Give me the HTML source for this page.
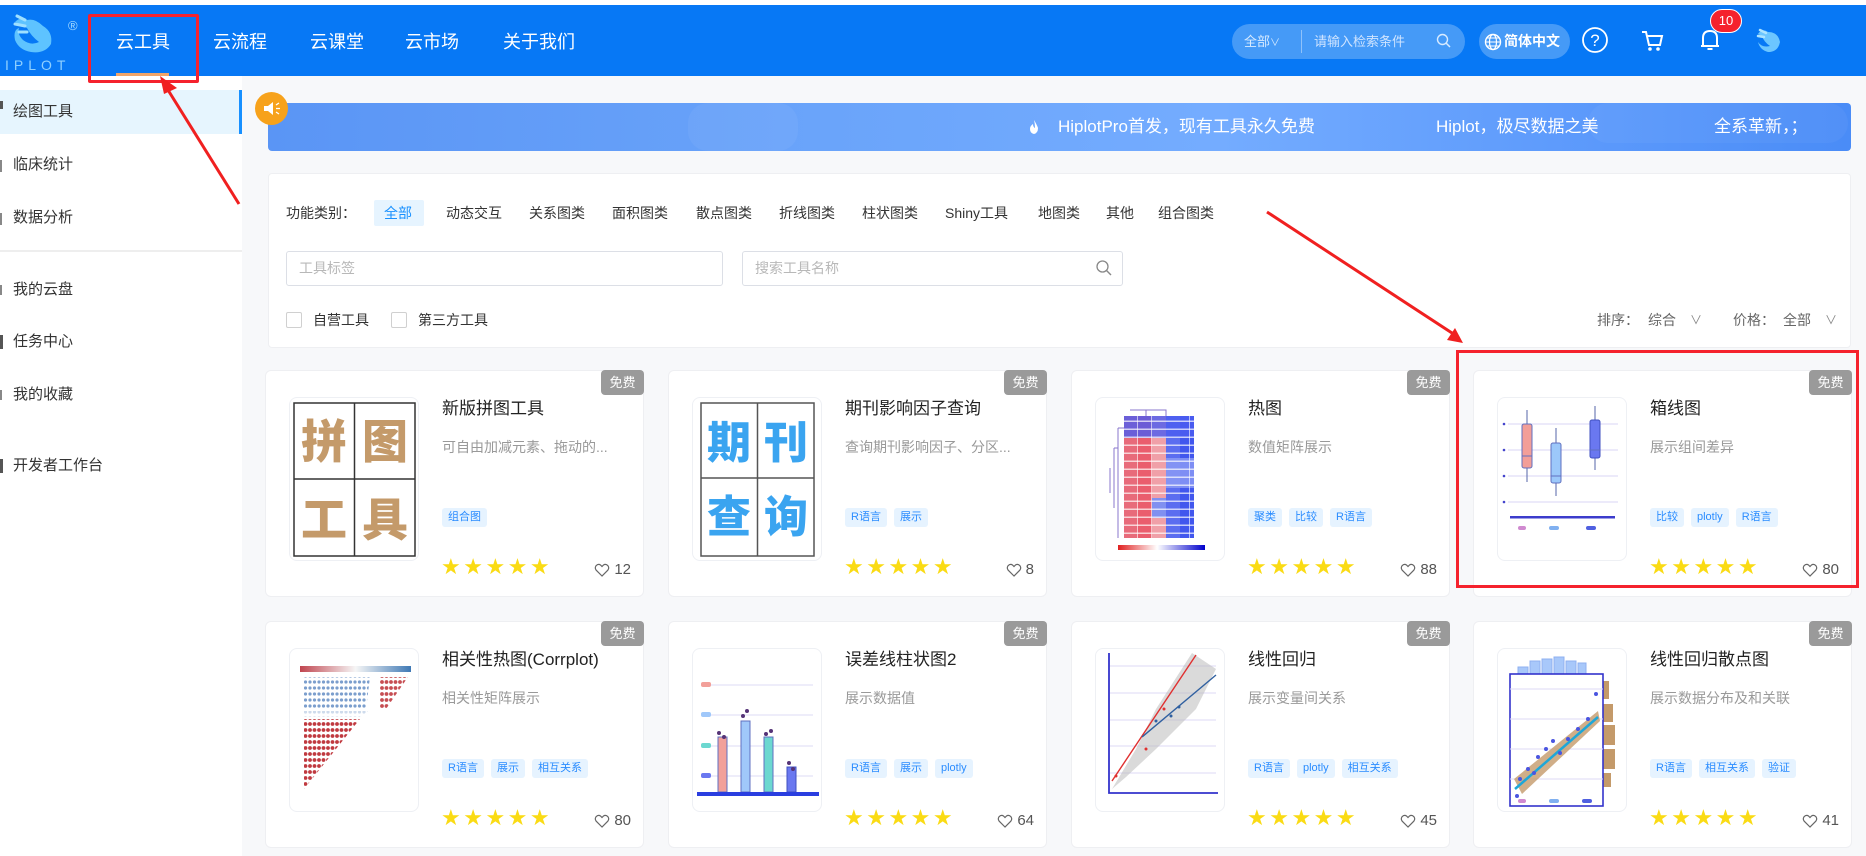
<!DOCTYPE html>
<html><head><meta charset="utf-8">
<style>
*{box-sizing:border-box;margin:0;padding:0}
body{width:1866px;height:856px;overflow:hidden;background:#f7f8fa;font-family:"Liberation Sans","Noto Sans CJK SC",sans-serif;position:relative;color:#333}
.abs{position:absolute}
.hdr{position:absolute;left:0;top:5px;width:1866px;height:71px;background:#0778f5}
.nav{position:absolute;top:29px;color:#fff;font-size:18px;line-height:26px}
.side{position:absolute;left:0;top:76px;width:242px;height:780px;background:#fff}
.si{position:absolute;left:13px;font-size:15px;color:#333;line-height:20px}
.card{position:absolute;width:379px;height:227px;background:#fff;border:1px solid #eeeff2;border-radius:6px}
.badge{position:absolute;right:-1px;top:-1px;width:43px;height:25px;background:#9a9a9a;color:#fff;font-size:13px;line-height:25px;text-align:center;border-radius:4px}
.img{position:absolute;left:23px;top:26px;width:130px;height:164px;border:1px solid #eef0f4;border-radius:8px;overflow:hidden;background:#fff}
.title{position:absolute;left:176px;top:26px;font-size:17px;color:#222;line-height:24px;white-space:nowrap}
.desc{position:absolute;left:176px;top:66px;font-size:14px;color:#999;line-height:20px;white-space:nowrap}
.tags{position:absolute;left:176px;top:137px;height:19px;display:flex;gap:7px}
.tags span{background:#e6f3ff;color:#2a8cff;font-size:11px;line-height:19px;padding:0 6px;border-radius:3px}
.stars{position:absolute;left:175px;top:185px;color:#fadb14;font-size:22px;letter-spacing:2.5px;line-height:24px;font-family:"DejaVu Sans",sans-serif}
.likes{position:absolute;right:12px;top:188px;font-size:15px;color:#555;line-height:22px;display:flex;align-items:center;gap:4px}
.tag2{position:absolute;top:200px;font-size:14px;color:#333;line-height:26px}
.inp{position:absolute;top:251px;height:35px;border:1px solid #dcdfe6;border-radius:3px;background:#fff;font-size:14px;color:#b8b8b8;line-height:33px;padding-left:12px}
.cb{position:absolute;top:312px;width:16px;height:16px;border:1px solid #d0d0d0;border-radius:2px;background:#fff}
</style></head><body>
<div class="abs" style="left:0;top:0;width:1866px;height:5px;background:#fff"></div>
<div class="hdr"></div>
<svg class="abs" style="left:5px;top:10px" width="80" height="62" viewBox="0 0 80 62">
<path d="M10 12 Q16 6 22 10 Q30 8 38 16 Q48 22 46 34 Q40 44 26 42 Q14 40 10 30 Q8 20 14 18 Q12 24 18 30 Q26 36 34 32 Q26 26 22 18 Z" fill="#5ec3ff"/>
<path d="M12 6 l8 4 M10 14 l10 2 M14 22 l8 0" stroke="#9fe0ff" stroke-width="3" stroke-linecap="round"/>
<text x="63" y="20" fill="#a8dcff" font-size="13" font-family="Liberation Sans">®</text>
<text x="0" y="60" fill="#8fd0ff" font-size="14" letter-spacing="5" font-family="Liberation Sans">IPLOT</text>
</svg>
<div class="nav" style="left:116px">云工具</div>
<div class="abs" style="left:116px;top:73px;width:53px;height:3px;background:#f0a56a"></div>
<div class="nav" style="left:213px">云流程</div>
<div class="nav" style="left:310px">云课堂</div>
<div class="nav" style="left:405px">云市场</div>
<div class="nav" style="left:503px">关于我们</div>
<div class="abs" style="left:1232px;top:24px;width:233px;height:35px;border-radius:18px;background:rgba(255,255,255,0.25)"></div>
<div class="abs" style="left:1244px;top:32px;font-size:13px;color:#d8ebff;line-height:19px">全部<span style="font-size:10px">∨</span></div>
<div class="abs" style="left:1301px;top:30px;width:1px;height:23px;background:rgba(255,255,255,0.4)"></div>
<div class="abs" style="left:1314px;top:32px;font-size:13px;color:#cfe4ff;line-height:19px">请输入检索条件</div>
<svg class="abs" style="left:1436px;top:33px" width="16" height="16"><circle cx="6.5" cy="6.5" r="5" fill="none" stroke="#d8ebff" stroke-width="1.4"/><path d="M10 10 L14 14" stroke="#d8ebff" stroke-width="1.5"/></svg>
<div class="abs" style="left:1479px;top:24px;width:91px;height:35px;border-radius:18px;background:rgba(255,255,255,0.25)"></div>
<svg class="abs" style="left:1484px;top:33px" width="18" height="18"><circle cx="9" cy="9" r="7.5" fill="none" stroke="#fff" stroke-width="1.4"/><ellipse cx="9" cy="9" rx="3.5" ry="7.5" fill="none" stroke="#fff" stroke-width="1.2"/><path d="M1.5 9 H16.5 M3 5 H15 M3 13 H15" stroke="#fff" stroke-width="1.1"/></svg>
<div class="abs" style="left:1504px;top:31px;font-size:14px;color:#fff;font-weight:bold;line-height:20px">简体中文</div>
<svg class="abs" style="left:1581px;top:26px" width="28" height="28"><circle cx="14" cy="14" r="12" fill="none" stroke="#fff" stroke-width="1.8"/><text x="14" y="20" fill="#fff" font-size="17" text-anchor="middle" font-family="Liberation Sans">?</text></svg>
<svg class="abs" style="left:1639px;top:28px" width="26" height="26"><path d="M3 4 H7 L10 17 H21 L23 8 H8" fill="none" stroke="#fff" stroke-width="2"/><circle cx="11" cy="21" r="1.8" fill="#fff"/><circle cx="19" cy="21" r="1.8" fill="#fff"/></svg>
<svg class="abs" style="left:1698px;top:27px" width="24" height="26"><path d="M5 19 V11 Q5 4 12 4 Q19 4 19 11 V19 Z M3 19 H21 M9.5 22 H14.5" fill="none" stroke="#fff" stroke-width="2"/></svg>
<div class="abs" style="left:1710px;top:9px;width:32px;height:24px;border-radius:12px;background:#f5222d;border:1px solid #fff;color:#fff;font-size:13px;line-height:22px;text-align:center">10</div>
<svg class="abs" style="left:1752px;top:24px" width="32" height="32"><path d="M6 10 Q10 4 16 8 Q26 8 28 18 Q26 28 16 28 Q8 26 6 18 Q10 24 18 22 Q12 18 10 12 Z" fill="#6cc6ff"/><path d="M8 6 l6 3 M6 12 l6 1" stroke="#aee4ff" stroke-width="2.5" stroke-linecap="round"/></svg>

<div class="side"></div>
<div class="abs" style="left:0;top:90px;width:242px;height:44px;background:#e6f5fe"></div>
<div class="abs" style="left:239px;top:90px;width:3px;height:44px;background:#1890ff"></div>
<div class="si" style="top:90px;line-height:44px">绘图工具</div>
<div class="si" style="top:155px">临床统计</div>
<div class="si" style="top:208px">数据分析</div>
<div class="abs" style="left:0;top:250px;width:242px;height:2px;background:#eee"></div>
<div class="si" style="top:280px">我的云盘</div>
<div class="si" style="top:332px">任务中心</div>
<div class="si" style="top:385px">我的收藏</div>
<div class="si" style="top:456px">开发者工作台</div>
<div class="abs" style="left:0;top:101px;width:3px;height:8px;background:#555"></div>
<div class="abs" style="left:0;top:160px;width:2px;height:12px;background:#888"></div>
<div class="abs" style="left:0;top:213px;width:2px;height:12px;background:#888"></div>
<div class="abs" style="left:0;top:285px;width:2px;height:10px;background:#888"></div>
<div class="abs" style="left:0;top:335px;width:3px;height:14px;background:#555"></div>
<div class="abs" style="left:0;top:390px;width:2px;height:10px;background:#888"></div>
<div class="abs" style="left:0;top:459px;width:3px;height:14px;background:#555"></div>

<div class="abs" style="left:268px;top:103px;width:1583px;height:48px;border-radius:4px;background:linear-gradient(90deg,#5a95f5 0%,#6aa4fa 35%,#74acff 60%,#5a98fb 85%,#4a8cf7 100%);overflow:hidden">
<div class="abs" style="left:420px;top:0;width:110px;height:48px;background:rgba(255,255,255,0.05);border-radius:20px"></div>
<div class="abs" style="left:1320px;top:0;width:260px;height:40px;background:rgba(255,255,255,0.04);border-radius:20px"></div>
</div>
<svg class="abs" style="left:1028px;top:119px" width="12" height="16"><path d="M6 1 Q9 6 10 9 Q10 14 6 15 Q2 14 2 10 Q2 7 5 5 Q5 8 7 9 Q7 5 6 1Z" fill="#fff"/></svg>
<div class="abs" style="left:1058px;top:115px;font-size:17px;color:#fff;line-height:24px;white-space:nowrap">HiplotPro首发，现有工具永久免费</div>
<div class="abs" style="left:1436px;top:115px;font-size:17px;color:#fff;line-height:24px;white-space:nowrap">Hiplot，极尽数据之美</div>
<div class="abs" style="left:1714px;top:115px;width:94px;overflow:hidden;font-size:17px;color:#fff;line-height:24px;white-space:nowrap">全系革新，；</div>
<div class="abs" style="left:255px;top:92px;width:33px;height:33px;border-radius:50%;background:#f7a21b"></div>
<svg class="abs" style="left:261px;top:99px" width="22" height="19"><path d="M3 7 H7 L12 3 V16 L7 12 H3 Z" fill="#fff"/><path d="M15 9.5 H19 M15 6 L18 4 M15 13 L18 15" stroke="#fff" stroke-width="1.3"/></svg>

<div class="abs" style="left:268px;top:173px;width:1583px;height:175px;background:#fff;border:1px solid #eeeff2;border-radius:4px"></div>
<div class="tag2" style="left:286px">功能类别：</div>
<div class="abs" style="left:374px;top:200px;width:50px;height:26px;background:#e6f4ff;border-radius:2px"></div>
<div class="tag2" style="left:384px;color:#1890ff">全部</div>
<div class="tag2" style="left:446px">动态交互</div>
<div class="tag2" style="left:529px">关系图类</div>
<div class="tag2" style="left:612px">面积图类</div>
<div class="tag2" style="left:696px">散点图类</div>
<div class="tag2" style="left:779px">折线图类</div>
<div class="tag2" style="left:862px">柱状图类</div>
<div class="tag2" style="left:945px">Shiny工具</div>
<div class="tag2" style="left:1038px">地图类</div>
<div class="tag2" style="left:1106px">其他</div>
<div class="tag2" style="left:1158px">组合图类</div>
<div class="inp" style="left:286px;width:437px">工具标签</div>
<div class="inp" style="left:742px;width:381px">搜索工具名称</div>
<svg class="abs" style="left:1095px;top:259px" width="18" height="18"><circle cx="7.5" cy="7.5" r="5.5" fill="none" stroke="#888" stroke-width="1.3"/><path d="M11.5 11.5 L16 16" stroke="#888" stroke-width="1.4"/></svg>
<div class="cb" style="left:286px"></div>
<div class="abs" style="left:313px;top:310px;font-size:14px;line-height:20px">自营工具</div>
<div class="cb" style="left:391px"></div>
<div class="abs" style="left:418px;top:310px;font-size:14px;line-height:20px">第三方工具</div>
<div class="abs" style="left:1597px;top:310px;font-size:14px;line-height:20px;color:#666">排序：</div>
<div class="abs" style="left:1648px;top:310px;font-size:14px;line-height:20px;color:#666">综合</div>
<div class="abs" style="left:1690px;top:310px;font-size:12px;line-height:20px;color:#888">∨</div>
<div class="abs" style="left:1733px;top:310px;font-size:14px;line-height:20px;color:#666">价格：</div>
<div class="abs" style="left:1783px;top:310px;font-size:14px;line-height:20px;color:#666">全部</div>
<div class="abs" style="left:1825px;top:310px;font-size:12px;line-height:20px;color:#888">∨</div>

<svg width="0" height="0" style="position:absolute"><defs>
<symbol id="heart" viewBox="0 0 16 16"><path d="M8 14 L2.2 8.2 Q0.5 6 2 3.8 Q4.2 1.5 6.5 3 L8 4.5 L9.5 3 Q11.8 1.5 14 3.8 Q15.5 6 13.8 8.2 Z" fill="none" stroke="#666" stroke-width="1.2"/></symbol>
</defs></svg>

<div class="card" style="left:265px;top:370px">
<div class="badge">免费</div>
<div class="img"><svg width="130" height="164">
<rect x="4" y="5" width="121" height="153" fill="#fff" stroke="#333" stroke-width="1.5"/><path d="M64.5 5 V158 M4 81 H125" stroke="#333" stroke-width="1.5"/>
<g font-family="Noto Sans CJK SC" font-weight="900" font-size="46" fill="#c49a6a" text-anchor="middle"><text x="34" y="60">拼</text><text x="95" y="60">图</text><text x="34" y="138">工</text><text x="95" y="138">具</text></g></svg></div>
<div class="title">新版拼图工具</div><div class="desc">可自由加减元素、拖动的...</div>
<div class="tags"><span>组合图</span></div>
<div class="stars">★★★★★</div><div class="likes"><svg width="16" height="16"><use href="#heart"/></svg>12</div>
</div>

<div class="card" style="left:668px;top:370px">
<div class="badge">免费</div>
<div class="img"><svg width="130" height="164">
<rect x="8" y="5" width="113" height="153" fill="#fff" stroke="#555" stroke-width="1.5"/><path d="M64.5 5 V158 M8 80 H121" stroke="#555" stroke-width="1.5"/>
<g font-family="Noto Sans CJK SC" font-weight="900" font-size="44" fill="#3aa4f0" text-anchor="middle"><text x="36" y="60">期</text><text x="93" y="60">刊</text><text x="36" y="134">查</text><text x="93" y="134">询</text></g></svg></div>
<div class="title">期刊影响因子查询</div><div class="desc">查询期刊影响因子、分区...</div>
<div class="tags"><span>R语言</span><span>展示</span></div>
<div class="stars">★★★★★</div><div class="likes"><svg width="16" height="16"><use href="#heart"/></svg>8</div>
</div>

<div class="card" style="left:1071px;top:370px">
<div class="badge">免费</div>
<div class="img"><svg width="130" height="164">
<defs><pattern id="hrow" width="80" height="8" patternUnits="userSpaceOnUse"><rect x="0" y="6.5" width="80" height="1.5" fill="#fff" opacity=".7"/><rect x="13" y="0" width="1" height="8" fill="#fff" opacity=".6"/><rect x="27" y="0" width="1" height="8" fill="#fff" opacity=".6"/><rect x="41" y="0" width="1" height="8" fill="#fff" opacity=".6"/><rect x="55" y="0" width="1" height="8" fill="#fff" opacity=".6"/></pattern></defs>
<path d="M22 30 V140 M18 50 V110 M14 70 V95 M22 30 H28 M18 50 H22 M34 12 H70 V22 M50 12 V20" stroke="#8877cc" fill="none" stroke-width="1"/>
<rect x="28" y="18" width="14" height="122" fill="#e86b7a"/><rect x="42" y="18" width="14" height="122" fill="#ea5d6d"/><rect x="56" y="18" width="14" height="122" fill="#f0a0a8"/><rect x="70" y="18" width="14" height="122" fill="#5b6df0"/><rect x="84" y="18" width="14" height="122" fill="#4257ee"/>
<rect x="28" y="18" width="70" height="22" fill="#4b5cf0" opacity=".8"/><rect x="70" y="60" width="28" height="30" fill="#8d9cf5" opacity=".8"/><rect x="56" y="100" width="14" height="20" fill="#8090f0"/>
<rect x="28" y="18" width="70" height="122" fill="url(#hrow)"/>
<defs><linearGradient id="hg"><stop offset="0" stop-color="#e02020"/><stop offset=".45" stop-color="#fff"/><stop offset="1" stop-color="#0000cc"/></linearGradient></defs>
<rect x="22" y="147" width="87" height="5" fill="url(#hg)"/></svg></div>
<div class="title">热图</div><div class="desc">数值矩阵展示</div>
<div class="tags"><span>聚类</span><span>比较</span><span>R语言</span></div>
<div class="stars">★★★★★</div><div class="likes"><svg width="16" height="16"><use href="#heart"/></svg>88</div>
</div>

<div class="card" style="left:1473px;top:370px">
<div class="badge">免费</div>
<div class="img"><svg width="130" height="164">
<g stroke="#d8d6f4" stroke-width="1"><path d="M10 26 H120 M10 52 H120 M10 78 H120 M10 104 H120"/></g>
<g fill="#4444cc"><circle cx="6" cy="26" r="1.3"/><circle cx="6" cy="52" r="1.3"/><circle cx="6" cy="78" r="1.3"/><circle cx="6" cy="104" r="1.3"/></g>
<path d="M29 12 V26 M29 70 V84 M58 30 V45 M58 85 V98 M97 8 V22 M97 60 V72" stroke="#5566aa" stroke-width="1"/>
<rect x="24" y="26" width="10" height="44" rx="2" fill="#f29e98" stroke="#6070c0"/><rect x="53" y="45" width="10" height="40" rx="2" fill="#9cc8fa" stroke="#6070c0"/><rect x="92" y="22" width="10" height="38" rx="2" fill="#6a78f0" stroke="#4050c0"/>
<path d="M24 58 H34 M53 78 H63 M92 52 H102" stroke="#6070c0"/>
<rect x="12" y="118" width="105" height="2.5" fill="#3c3ccc"/>
<rect x="20" y="128" width="8" height="4" rx="2" fill="#d08ad0"/><rect x="51" y="128" width="10" height="4" rx="2" fill="#80b0f0"/><rect x="88" y="128" width="10" height="4" rx="2" fill="#5060e0"/></svg></div>
<div class="title">箱线图</div><div class="desc">展示组间差异</div>
<div class="tags"><span>比较</span><span>plotly</span><span>R语言</span></div>
<div class="stars">★★★★★</div><div class="likes"><svg width="16" height="16"><use href="#heart"/></svg>80</div>
</div>

<div class="card" style="left:265px;top:621px">
<div class="badge">免费</div>
<div class="img"><svg width="130" height="164">
<defs><linearGradient id="cg"><stop offset="0" stop-color="#c0454f"/><stop offset=".5" stop-color="#f6f6f6"/><stop offset="1" stop-color="#3f79b5"/></linearGradient>
<pattern id="bd" width="4.5" height="6" patternUnits="userSpaceOnUse"><circle cx="2" cy="3" r="1.6" fill="#5a86c0"/></pattern>
<pattern id="rd" width="4.5" height="6" patternUnits="userSpaceOnUse"><circle cx="2" cy="3" r="1.9" fill="#c0393f"/></pattern></defs>
<rect x="10" y="17" width="111" height="6" fill="url(#cg)"/>
<polygon points="14,28 80,28 76,60 14,60" fill="url(#bd)" opacity=".8"/>
<polygon points="90,28 118,28 96,60 90,60" fill="url(#rd)" opacity=".9"/>
<polygon points="14,70 70,70 14,140" fill="url(#rd)"/>
<polygon points="14,62 78,62 70,68 14,68" fill="url(#bd)" opacity=".3"/></svg></div>
<div class="title">相关性热图(Corrplot)</div><div class="desc">相关性矩阵展示</div>
<div class="tags"><span>R语言</span><span>展示</span><span>相互关系</span></div>
<div class="stars">★★★★★</div><div class="likes"><svg width="16" height="16"><use href="#heart"/></svg>80</div>
</div>

<div class="card" style="left:668px;top:621px">
<div class="badge">免费</div>
<div class="img"><svg width="130" height="164">
<g stroke="#e4e2f8" stroke-width="1.3"><path d="M10 36 H120 M10 66 H120 M10 97 H120 M10 127 H120"/></g>
<rect x="8" y="33" width="10" height="5" rx="2" fill="#f2a09a"/><rect x="8" y="63" width="10" height="5" rx="2" fill="#a0c8fa"/><rect x="8" y="94" width="10" height="5" rx="2" fill="#6cd8d0"/><rect x="8" y="124" width="10" height="5" rx="2" fill="#6a78f0"/>
<rect x="25" y="88" width="9" height="55" fill="#f2a09a" stroke="#6070c0"/><rect x="48" y="72" width="9" height="71" fill="#a0c8fa" stroke="#6070c0"/><rect x="71" y="88" width="9" height="55" fill="#6cd8d0" stroke="#6070c0"/><rect x="94" y="118" width="9" height="25" fill="#6a78f0" stroke="#4050c0"/>
<g fill="#553377"><circle cx="26" cy="84" r="2"/><circle cx="31" cy="88" r="2"/><circle cx="50" cy="67" r="2"/><circle cx="54" cy="62" r="2"/><circle cx="73" cy="85" r="2"/><circle cx="78" cy="82" r="2"/><circle cx="96" cy="114" r="2"/><circle cx="100" cy="120" r="2"/></g>
<rect x="4" y="143" width="122" height="4" fill="#2a3ee0"/></svg></div>
<div class="title">误差线柱状图2</div><div class="desc">展示数据值</div>
<div class="tags"><span>R语言</span><span>展示</span><span>plotly</span></div>
<div class="stars">★★★★★</div><div class="likes"><svg width="16" height="16"><use href="#heart"/></svg>64</div>
</div>

<div class="card" style="left:1071px;top:621px">
<div class="badge">免费</div>
<div class="img"><svg width="130" height="164">
<g stroke="#dcd8f6" stroke-width="1"><path d="M14 17 H120 M14 44 H120 M14 71 H120 M14 97 H120 M14 124 H120"/></g>
<path d="M13 4 V144 H122" stroke="#3333cc" stroke-width="1.8" fill="none"/>
<polygon points="16,140 40,100 60,60 96,4 120,20 100,60 60,100 30,128" fill="#bbb" opacity=".55"/>
<path d="M16 132 L100 6" stroke="#e03030" stroke-width="1.4"/><path d="M46 88 L120 26" stroke="#3060a0" stroke-width="1.4"/>
<g fill="#3060a0"><circle cx="60" cy="72" r="1.5"/><circle cx="75" cy="67" r="1.5"/><circle cx="83" cy="58" r="1.5"/></g><g fill="#e03030"><circle cx="20" cy="127" r="1.5"/><circle cx="50" cy="100" r="1.5"/><circle cx="68" cy="60" r="1.5"/></g></svg></div>
<div class="title">线性回归</div><div class="desc">展示变量间关系</div>
<div class="tags"><span>R语言</span><span>plotly</span><span>相互关系</span></div>
<div class="stars">★★★★★</div><div class="likes"><svg width="16" height="16"><use href="#heart"/></svg>45</div>
</div>

<div class="card" style="left:1473px;top:621px">
<div class="badge">免费</div>
<div class="img"><svg width="130" height="164">
<g fill="#a8c8fa" stroke="#8fb0f0"><rect x="20" y="18" width="10" height="7"/><rect x="32" y="12" width="10" height="13"/><rect x="44" y="10" width="10" height="15"/><rect x="56" y="8" width="10" height="17"/><rect x="68" y="12" width="10" height="13"/><rect x="80" y="14" width="8" height="11"/></g>
<g fill="#c49a6a"><rect x="105" y="32" width="6" height="18"/><rect x="105" y="55" width="10" height="18"/><rect x="105" y="76" width="12" height="20"/><rect x="105" y="100" width="12" height="20"/><rect x="105" y="124" width="8" height="14"/></g>
<rect x="12" y="25" width="93" height="132" fill="none" stroke="#3333cc" stroke-width="1.6"/>
<g stroke="#dcd8f6"><path d="M12 40 H105 M12 70 H105 M12 100 H105 M12 130 H105"/></g>
<polygon points="16,130 100,62 102,72 24,145" fill="#c49a6a" opacity=".8"/>
<path d="M17 140 L100 68" stroke="#1ea7d8" stroke-width="2.5"/>
<g fill="#4a55e0"><circle cx="22" cy="130" r="2"/><circle cx="30" cy="120" r="2"/><circle cx="40" cy="108" r="2"/><circle cx="48" cy="100" r="2"/><circle cx="55" cy="92" r="2"/><circle cx="62" cy="104" r="2"/><circle cx="70" cy="90" r="2"/><circle cx="80" cy="80" r="2"/><circle cx="90" cy="70" r="2"/><circle cx="98" cy="45" r="2"/><circle cx="36" cy="124" r="2"/><circle cx="19" cy="147" r="2"/></g>
<rect x="20" y="150" width="8" height="4" rx="2" fill="#d08ad0"/><rect x="51" y="150" width="10" height="4" rx="2" fill="#80b0f0"/><rect x="84" y="150" width="10" height="4" rx="2" fill="#5060e0"/></svg></div>
<div class="title">线性回归散点图</div><div class="desc">展示数据分布及和关联</div>
<div class="tags"><span>R语言</span><span>相互关系</span><span>验证</span></div>
<div class="stars">★★★★★</div><div class="likes"><svg width="16" height="16"><use href="#heart"/></svg>41</div>
</div>

<div class="abs" style="left:88px;top:14px;width:111px;height:69px;border:3px solid #f5222d;border-radius:2px"></div>
<div class="abs" style="left:1456px;top:350px;width:403px;height:238px;border:3px solid #f5222d"></div>
<svg class="abs" style="left:0;top:0" width="1866" height="856">
<path d="M239 204 L168 90" stroke="#f02020" stroke-width="3"/><polygon points="160,76 177,88 164,94" fill="#f02020"/>
<path d="M1267 212 L1452 333" stroke="#f02020" stroke-width="3"/><polygon points="1463,343 1447,340 1455,328" fill="#f02020"/>
</svg>
</body></html>
